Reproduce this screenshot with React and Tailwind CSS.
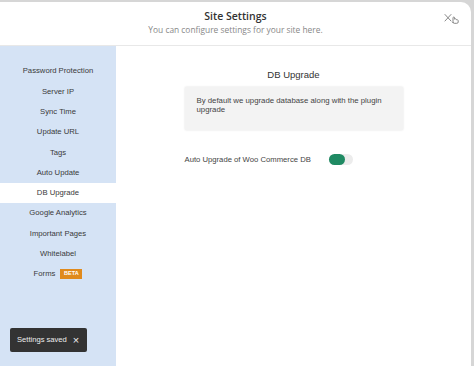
export default function App() {
  const items = [
    "Password Protection",
    "Server IP",
    "Sync Time",
    "Update URL",
    "Tags",
    "Auto Update",
    "DB Upgrade",
    "Google Analytics",
    "Important Pages",
    "Whitelabel",
  ];
  const active = "DB Upgrade";

  return (
    <div className="w-[474px] h-[366px] bg-[#d6d6d6] pt-[2px] pr-[3px] overflow-hidden">
      <div className="relative h-[364px] bg-white rounded-tr-[10px] flex flex-col overflow-hidden">
        {/* header */}
        <div className="relative h-[44px] shrink-0 border-b border-[#e8e8e8] flex flex-col items-center pt-[7px] font-['Open_Sans',sans-serif]">
          <div className="text-[10.5px] leading-[14px] font-semibold text-[#333]">Site Settings</div>
          <div className="text-[8.4px] leading-[14px] text-[#888]">
            You can configure settings for your site here.
          </div>
          <svg
            className="absolute right-[11px] top-[11px]"
            width="16"
            height="11"
            viewBox="0 0 16 11"
            fill="none"
            stroke="#888"
            strokeWidth="1"
            strokeLinecap="round"
            strokeLinejoin="round"
          >
            <path d="M1 1.5 L7 8 M7 1.5 L1 8" />
            <path d="M9 9.5 V5 Q9 4 9.8 4 Q10.6 4 10.6 5 V6.2 Q11 5.6 11.7 5.8 Q12.4 6 12.4 6.8 Q13 6.4 13.6 6.8 Q14.2 7.2 14.2 8 V9 Q14.2 10.3 12.8 10.3 H10.2 Q9 10.3 9 9.5 Z" />
          </svg>
        </div>

        <div className="flex flex-1 min-h-0">
          {/* sidebar */}
          <div className="w-[116px] shrink-0 bg-[#d5e3f5] pt-[15px] font-['Liberation_Sans',Arial,sans-serif] text-[7.7px] text-[#3a3a3a]">
            {items.map((it) => (
              <div
                key={it}
                className={`h-[20.3px] flex items-center justify-center ${it === active ? "bg-white" : ""}`}
              >
                {it}
              </div>
            ))}
            <div className="h-[20.3px] flex items-center justify-center gap-[5px]">
              Forms
              <span className="bg-[#e08a1c] text-white text-[5.5px] font-bold w-[22px] h-[10px] flex items-center justify-center leading-none">
                BETA
              </span>
            </div>
          </div>

          {/* content */}
          <div className="flex-1 flex flex-col items-center pt-[22px] font-['Liberation_Sans',Arial,sans-serif] text-[#333]">
            <div className="text-[9.5px] leading-[14px]">DB Upgrade</div>
            <div className="mt-[5px] w-[218px] h-[43px] bg-[#f3f3f3] shadow-[0_0_2px_rgba(0,0,0,0.12)] px-[12px] pt-[10px] text-[7.8px] leading-[8.5px] text-[#444]">
              By default we upgrade database along with the plugin upgrade
            </div>
            <div className="mt-[24px] w-[218px] flex items-center">
              <span className="text-[7.7px] text-[#444] w-[144px]">Auto Upgrade of Woo Commerce DB</span>
              <div className="w-[24px] h-[11px] rounded-full bg-[#ececec] flex">
                <div className="w-[16px] h-[11px] rounded-full bg-[#1f8a63]"></div>
              </div>
            </div>
          </div>
        </div>

        {/* toast */}
        <div className="absolute left-[10px] top-[326px] h-[24px] pl-[7px] pr-[8px] bg-[#333333] flex items-center gap-[6px] text-[7.6px] text-[#eee] font-['Liberation_Sans',Arial,sans-serif] rounded-[2px]">
          Settings saved <span className="text-[11px] leading-none">×</span>
        </div>
      </div>
    </div>
  );
}
